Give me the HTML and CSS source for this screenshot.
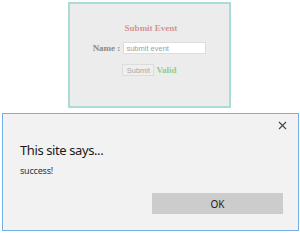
FILE: index.html
```html
<!DOCTYPE html>
<html>
<head>
<meta charset="utf-8">
<link rel="stylesheet" href="styles.css">
</head>
<body>
<div class="page">
  <form class="panel">
    <div class="title">Submit Event</div>
    <div class="row">
      <label class="label">Name :</label>
      <input class="field" type="text" placeholder="submit event">
    </div>
    <div class="row actions">
      <button class="submit" type="button">Submit</button>
      <span class="valid">Valid</span>
    </div>
  </form>
  <div class="dialog">
    <div class="dialog-head">
      <svg class="close" width="9" height="9" viewBox="0 0 9 9"><path d="M1 1 L8 8 M8 1 L1 8" stroke="#444" stroke-width="1.1" fill="none"/></svg>
    </div>
    <div class="dialog-title">This site says...</div>
    <div class="dialog-msg">success!</div>
    <div class="dialog-foot">
      <button class="ok" type="button">OK</button>
    </div>
  </div>
</div>
</body>
</html>
```
FILE: styles.css
```css
html, body {
  margin: 0;
  padding: 0;
  background: #ffffff;
}
.page {
  width: 300px;
  height: 233px;
  padding-top: 2px;
  box-sizing: border-box;
  display: flex;
  flex-direction: column;
}
.panel {
  margin: 0 0 0 68px;
  width: 163px;
  height: 106px;
  box-sizing: border-box;
  border: 2px solid #a9dbd8;
  background: #ececec;
  display: flex;
  flex-direction: column;
  align-items: center;
  padding-top: 18px;
}
.title {
  font-family: "Liberation Serif", serif;
  font-weight: bold;
  font-size: 9px;
  line-height: 12px;
  color: #d49595;
  padding-left: 3px;
}
.row {
  display: flex;
  align-items: center;
  margin-top: 8px;
}
.label {
  font-family: "Liberation Serif", serif;
  font-weight: bold;
  font-size: 9px;
  color: #8a8a8a;
  margin-right: 3px;
}
.field {
  width: 83px;
  height: 12px;
  box-sizing: border-box;
  border: 1px solid #dddddd;
  background: #ffffff;
  padding: 0 2px;
  margin: 0;
  font-family: "Liberation Sans", sans-serif;
  font-size: 7.5px;
  color: #999;
  outline: none;
}
.field::placeholder {
  color: #a0a0a0;
}
.actions {
  margin-top: 10px;
}
.submit {
  width: 32px;
  height: 12px;
  box-sizing: border-box;
  border: 1px solid #dcdcdc;
  background: #efefef;
  padding: 0;
  margin: 0 2px 0 0;
  font-family: "Liberation Sans", sans-serif;
  font-size: 7.5px;
  color: #a8a8a8;
}
.valid {
  font-family: "Liberation Serif", serif;
  font-weight: bold;
  font-size: 9px;
  color: #8fcf8f;
}
.dialog {
  margin: 5px 0 0 2px;
  width: 297px;
  height: 118px;
  box-sizing: border-box;
  border: 1px solid #72b0e6;
  background: #f2f2f2;
  display: flex;
  flex-direction: column;
  font-family: "Noto Sans", "Open Sans", sans-serif;
}
.dialog-head {
  display: flex;
  justify-content: flex-end;
  padding: 7px 11px 0 0;
  height: 9px;
}
.dialog-title {
  margin: 11px 0 0 17px;
  font-size: 13px;
  letter-spacing: -0.4px;
  line-height: 18px;
  color: #1a1a1a;
}
.dialog-msg {
  margin: 6px 0 0 17px;
  font-size: 9px;
  letter-spacing: -0.2px;
  line-height: 12px;
  color: #333;
}
.dialog-foot {
  display: flex;
  justify-content: flex-end;
  padding-right: 15px;
  margin-top: 16px;
}
.ok {
  width: 131px;
  height: 21px;
  border: none;
  background: #cccccc;
  padding: 0;
  font-family: "Noto Sans", "Open Sans", sans-serif;
  font-size: 10px;
  color: #222;
}
```
